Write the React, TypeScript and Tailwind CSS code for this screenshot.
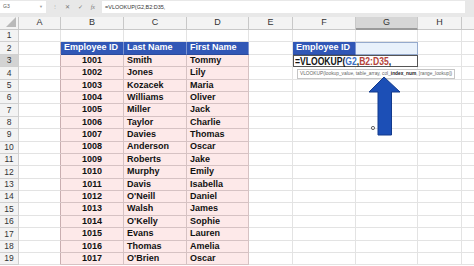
import { Fragment } from "react";

/**
 * Excel sheet: employee table with a VLOOKUP being typed into F3.
 */

const COLS = [
	{ key: "A", w: "w-[42px]" },
	{ key: "B", w: "w-[63px]" },
	{ key: "C", w: "w-[63px]" },
	{ key: "D", w: "w-[62px]" },
	{ key: "E", w: "w-[44px]" },
	{ key: "F", w: "w-[63px]" },
	{ key: "G", w: "w-[62px]" },
	{ key: "H", w: "w-[44px]" },
	{ key: "I", w: "w-[40px]" },
];

const EMPLOYEES: [string, string, string][] = [
	["1001", "Smith", "Tommy"],
	["1002", "Jones", "Lily"],
	["1003", "Kozacek", "Maria"],
	["1004", "Williams", "Oliver"],
	["1005", "Miller", "Jack"],
	["1006", "Taylor", "Charlie"],
	["1007", "Davies", "Thomas"],
	["1008", "Anderson", "Oscar"],
	["1009", "Roberts", "Jake"],
	["1010", "Murphy", "Emily"],
	["1011", "Davis", "Isabella"],
	["1012", "O'Neill", "Daniel"],
	["1013", "Walsh", "James"],
	["1014", "O'Kelly", "Sophie"],
	["1015", "Evans", "Lauren"],
	["1016", "Thomas", "Amelia"],
	["1017", "O'Brien", "Oscar"],
];

const cellFont = "font-['Liberation_Sans',Arial,sans-serif]";

function RowHeader({ n, active }: { n: number; active?: boolean }) {
	return (
		<div
			className={`flex w-[19px] shrink-0 items-center justify-center border-r border-b border-[#d0d0d0] text-[8.5px] text-[#333] ${
				active ? "bg-[#d3d3d3]" : "bg-[#f3f3f3]"
			}`}
		>
			{n}
		</div>
	);
}

function Blank({ w, edge }: { w: string; edge?: boolean }) {
	return (
		<div
			className={`${w} shrink-0 border-b border-r border-b-[#e3e3e3] ${
				edge ? "border-r-[#c9aeb0]" : "border-r-[#e3e3e3]"
			}`}
		/>
	);
}

function TableHead({ w, children }: { w: string; children: string }) {
	return (
		<div
			className={`${w} flex shrink-0 items-center border-r border-b border-r-[#7e95d0] border-b-[#2a4a9c] bg-[#3157b6] pl-[3px] text-[9px] font-bold text-white`}
		>
			{children}
		</div>
	);
}

function PinkCell({ w, center, children }: { w: string; center?: boolean; children: string }) {
	return (
		<div
			className={`${w} flex shrink-0 items-center border-r border-b border-[#d6c2c3] bg-[#fde9e9] text-[9px] font-bold text-[#111] ${
				center ? "justify-center" : "pl-[3px]"
			}`}
		>
			{children}
		</div>
	);
}

export default function App() {
	return (
		<div className={`relative h-[266px] w-[474px] overflow-hidden bg-white ${cellFont}`}>
			{/* formula bar */}
			<div className="flex h-[17px] items-start gap-[3px] bg-[#e8e8e8] pt-[1px]">
				<div className="flex h-[12px] w-[46px] items-center justify-between bg-white pl-[3px] pr-[3px] text-[5px] text-[#555]">
					<span>G3</span>
					<span className="text-[4px] text-[#999]">▼</span>
				</div>
				<div className="flex h-[12px] w-[50px] items-center justify-around text-[6px] text-[#777]">
					<span className="text-[4px] text-[#aaa]">⋮</span>
					<span>✕</span>
					<span>✓</span>
					<span className="font-['Liberation_Serif',serif] italic">fx</span>
				</div>
				<div className="mr-[9px] flex h-[12px] flex-1 items-center bg-white pl-[3px] text-[5.5px] text-[#333]">
					=VLOOKUP(G2,B2:D35,
				</div>
			</div>

			{/* column headers */}
			<div className="flex h-[13px]">
				<div className="relative w-[19px] shrink-0 border-r border-b border-[#c8c8c8] bg-[#f3f3f3]">
					<svg className="absolute right-[2px] bottom-[2px]" width="10" height="10" viewBox="0 0 10 10">
						<polygon points="10,0 10,10 0,10" fill="#b9b9b9" />
					</svg>
				</div>
				{COLS.map((c) => (
					<div
						key={c.key}
						className={`${c.w} flex shrink-0 items-center justify-center border-r text-[9px] text-[#333] ${
							c.key === "G"
								? "border-b-2 border-b-[#9a9a9a] border-r-[#c8c8c8] bg-[#d6d6d6]"
								: "border-b border-[#c8c8c8] bg-[#f3f3f3]"
						}`}
					>
						{c.key === "I" ? "" : c.key}
					</div>
				))}
			</div>

			{/* row 1 */}
			<div className="flex h-[12.4px]">
				<RowHeader n={1} />
				{COLS.map((c) => (
					<Blank key={c.key} w={c.w} />
				))}
			</div>

			{/* row 2 */}
			<div className="flex h-[12.4px]">
				<RowHeader n={2} />
				<Blank w={COLS[0].w} edge />
				<TableHead w={COLS[1].w}>Employee ID</TableHead>
				<TableHead w={COLS[2].w}>Last Name</TableHead>
				<TableHead w={COLS[3].w}>First Name</TableHead>
				<Blank w={COLS[4].w} />
				<TableHead w={COLS[5].w}>Employee ID</TableHead>
				<div className={`${COLS[6].w} shrink-0 border border-l-0 border-[#95aacd] bg-[#e8f1fb]`} />
				<Blank w={COLS[7].w} />
				<Blank w={COLS[8].w} />
			</div>

			{EMPLOYEES.map(([id, last, first], i) => {
				const n = i + 3;
				return (
					<div key={id} className="flex h-[12.4px]">
						<RowHeader n={n} active={n === 3} />
						<Blank w={COLS[0].w} edge />
						<PinkCell w={COLS[1].w} center>
							{id}
						</PinkCell>
						<PinkCell w={COLS[2].w}>{last}</PinkCell>
						<PinkCell w={COLS[3].w}>{first}</PinkCell>
						<Blank w={COLS[4].w} />
						{n === 3 ? (
							<div className="flex w-[125px] shrink-0 items-center overflow-visible border border-[#555] bg-white pl-[1px] text-[11px] font-bold whitespace-nowrap text-[#111]">
								<span className="inline-block origin-left scale-x-[0.78]">
									=VLOOKUP(<span className="text-[#3a6fc4]">G2</span>,<span className="text-[#b5443a]">B2:D35</span>,
								</span>
							</div>
						) : (
							<Fragment>
								<Blank w={COLS[5].w} />
								<Blank w={COLS[6].w} />
							</Fragment>
						)}
						<Blank w={COLS[7].w} />
						<Blank w={COLS[8].w} />
					</div>
				);
			})}

			{/* function tooltip */}
			<div className="absolute left-[297px] top-[69px] flex h-[10px] items-center border border-[#c6c6c6] bg-white px-[2px] text-[4.8px] whitespace-nowrap text-[#666]">
				VLOOKUP(lookup_value, table_array, col_<span className="font-bold text-[#222]">index_num</span>, [range_lookup])
			</div>

			{/* annotation arrow */}
			<svg className="absolute left-[368px] top-[76px]" width="34" height="61" viewBox="0 0 34 61">
				<polygon
					points="16,1 32,16 23.5,16 23.5,59 10,59 10,16 1,16"
					fill="#1c4fb6"
					stroke="#123a8c"
					strokeWidth="1"
				/>
			</svg>

			{/* cursor */}
			<svg className="absolute left-[370px] top-[125px]" width="6" height="6" viewBox="0 0 6 6">
				<circle cx="3" cy="3" r="1.6" fill="none" stroke="#666" strokeWidth="1" />
			</svg>
		</div>
	);
}
